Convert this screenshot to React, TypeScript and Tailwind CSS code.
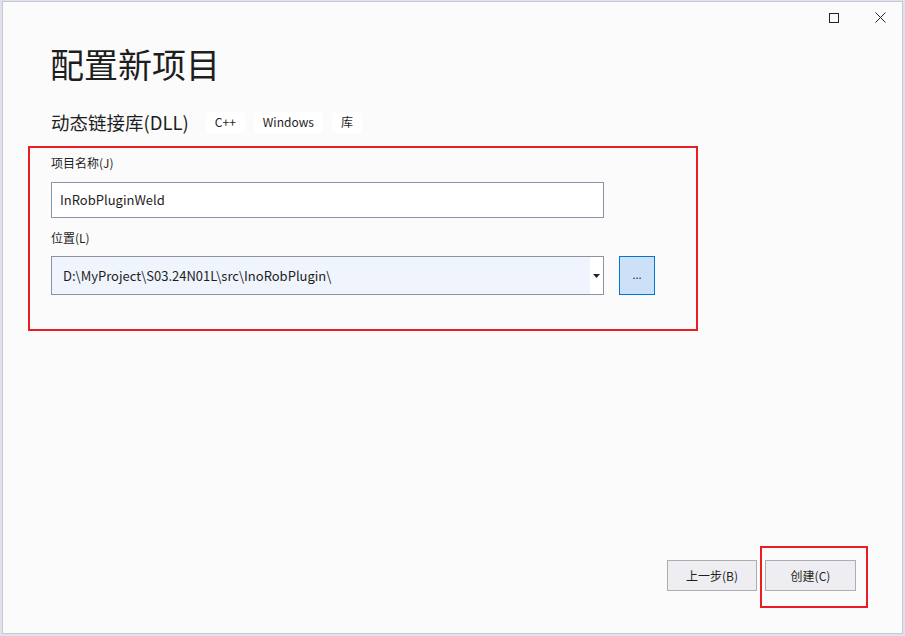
const font = { fontFamily: '"Noto Sans CJK SC", "Noto Sans", sans-serif' };

function Tag({ label }: { label: string }) {
  return (
    <span className="flex h-[21px] items-center rounded-[4px] bg-white px-[9px] text-[12px] text-[#1e1e1e]">
      {label}
    </span>
  );
}

export default function App() {
  return (
    <div className="h-[636px] w-[905px] bg-[#dfe2ea] pl-[2px] pt-[1px]" style={font}>
      <div className="flex h-[633px] w-[901px] flex-col border border-[#c5c9d6] bg-[#fbfbfb]">
        {/* window controls */}
        <div className="flex items-start justify-end gap-[36px] pr-[16px] pt-[11px]">
          <span className="block h-[10px] w-[10px] border border-[#1f2433]" />
          <svg width="11" height="11" viewBox="0 0 11 11" className="-mt-[1px]">
            <path d="M0.5 0.5 L10.5 10.5 M10.5 0.5 L0.5 10.5" stroke="#1f2433" strokeWidth="1" />
          </svg>
        </div>

        <div className="pl-[47px]">
          <h1 className="mt-[21px] text-[34px] leading-[40px] text-[#1e1e1e]">配置新项目</h1>

          <div className="mt-[26px] flex items-center">
            <span className="pl-[1px] text-[18.5px] leading-[24px] text-[#1e1e1e]">动态链接库(DLL)</span>
            <div className="ml-[17px] flex gap-[9px]">
              <Tag label="C++" />
              <Tag label="Windows" />
              <Tag label="库" />
            </div>
          </div>
        </div>

        <div className="ml-[25px] mt-[12px] w-[670px] border-2 border-[#ed1c24] pb-[34px] pl-[21px] pt-[7px]">
          <div className="text-[12px] leading-[16px] text-[#1e1e1e]">项目名称(J)</div>
          <div className="mt-[11px] flex h-[36px] w-[553px] items-center border border-[#8b93a5] bg-white pl-[8px] text-[13px] text-[#1e1e1e]">
            InRobPluginWeld
          </div>

          <div className="mt-[12px] text-[12px] leading-[16px] text-[#1e1e1e]">位置(L)</div>
          <div className="mt-[10px] flex items-center gap-[15px]">
            <div className="flex h-[39px] w-[553px] border border-[#8b93a5] bg-white">
              <div className="flex flex-1 items-center bg-[#eff4fd] pl-[11px] text-[13px] text-[#1e1e1e]">
                D:\MyProject\S03.24N01L\src\InoRobPlugin\
              </div>
              <div className="flex w-[13px] items-center justify-center">
                <svg width="7" height="4" viewBox="0 0 7 4">
                  <path d="M0 0 H7 L3.5 4 Z" fill="#1f2433" />
                </svg>
              </div>
            </div>
            <button className="flex h-[39px] w-[36px] items-center justify-center border border-[#0078d4] bg-[#cce0f7] pb-[2px] text-[11px] leading-none text-[#1e1e1e]">
              ...
            </button>
          </div>
        </div>

        <div className="mt-auto flex justify-end gap-[8px] pb-[42px] pr-[46px]">
          <button className="h-[31px] w-[90px] border border-[#adadad] bg-[#eeeef2] text-[12px] text-[#1e1e1e]">
            上一步(B)
          </button>
          <div className="relative">
            <button className="h-[31px] w-[91px] border border-[#adadad] bg-[#eeeef2] text-[12px] text-[#1e1e1e]">
              创建(C)
            </button>
            <span className="pointer-events-none absolute -left-[5px] -top-[14px] h-[62px] w-[108px] border-2 border-[#ed1c24]" />
          </div>
        </div>
      </div>
    </div>
  );
}
